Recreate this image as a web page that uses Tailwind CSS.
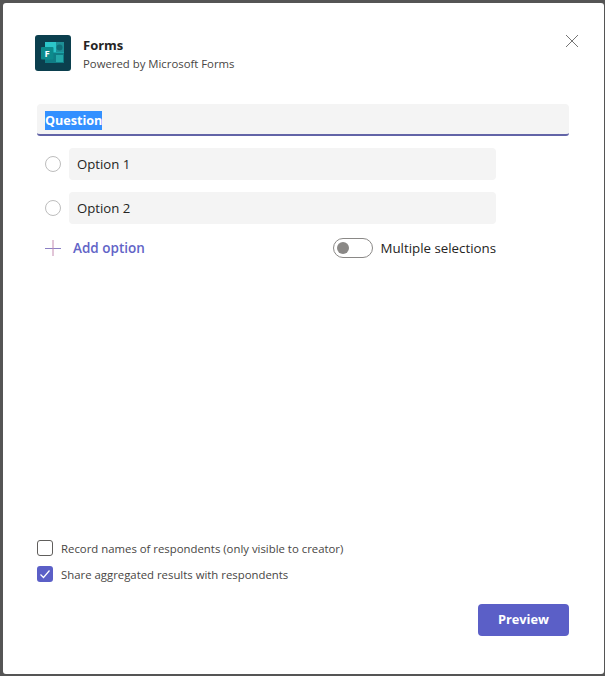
<!DOCTYPE html>
<html>
<head>
    <meta charset="utf-8">
    <script src="https://cdn.jsdelivr.net/npm/@tailwindcss/browser@4"></script>
    <title>Forms</title>
</head>
<body class="bg-[#555555] font-['Open_Sans','Noto_Sans',sans-serif] text-[#252423]">
    <div class="h-[676px] w-[605px] pt-[3px] pr-[1px] pb-[2px] pl-[3px]">
        <div class="relative flex h-full flex-col rounded-[3px] bg-white pt-[32px] pr-[35px] pb-[38px] pl-[34px]">
            <div class="-ml-[2px] flex h-[36px] items-start gap-[12px]">
                <svg width="36" height="36" viewBox="0 0 36 36" class="shrink-0">
                    <rect width="36" height="36" rx="3" fill="#0b3f4e"/>
                    <rect x="10" y="7" width="19" height="21" rx="1" fill="#1aa3a8"/>
                    <rect x="10" y="7" width="11" height="10" fill="#2cc5c9"/>
                    <rect x="21" y="7" width="8" height="10" fill="#1d8f96"/>
                    <circle cx="24.5" cy="12.5" r="3" fill="#0f6e78"/>
                    <rect x="10" y="18" width="19" height="10" fill="#0f7d85"/>
                    <rect x="21" y="20" width="7" height="7" fill="#23a8a8"/>
                    <rect x="6" y="12" width="12.5" height="12.5" rx="1" fill="#0c8a8c"/>
                    <text x="9.5" y="21.8" font-size="9.5" font-weight="700" fill="#ffffff">F</text>
                </svg>
                <div class="flex flex-col pt-[1px]">
                    <div class="text-[13px] leading-[18px] font-bold">Forms</div>
                    <div class="pt-[1px] text-[11.35px] leading-[18px] text-[#484644]">Powered by Microsoft Forms</div>
                </div>
            </div>

            <svg width="14" height="14" viewBox="0 0 14 14" class="absolute top-[31px] right-[25px]" fill="none" stroke="#757575" stroke-width="1">
                <path d="M1 1 L13 13 M13 1 L1 13"/>
            </svg>

            <div class="mt-[33px] flex h-[32px] w-[532px] items-center rounded-t-[4px] rounded-b-[3px] border-b-2 border-[#6264a7] bg-[#f4f4f4] pt-[2px] pl-[8px]">
                <span class="bg-[#3390ff] text-[12.6px] leading-[19px] font-bold text-white">Question</span>
            </div>

            <div class="mt-[12px] flex flex-col gap-[12px]">
                <div class="flex items-center gap-[8px] pl-[8px]">
                    <span class="h-[16px] w-[16px] rounded-full border border-[#bdbdbd]"></span>
                    <div class="flex h-[32px] w-[427px] items-center rounded-[4px] bg-[#f4f4f4] pt-[1px] pl-[8px] text-[13.2px]">Option 1</div>
                </div>
                <div class="flex items-center gap-[8px] pl-[8px]">
                    <span class="h-[16px] w-[16px] rounded-full border border-[#bdbdbd]"></span>
                    <div class="flex h-[32px] w-[427px] items-center rounded-[4px] bg-[#f4f4f4] pt-[1px] pl-[8px] text-[13.2px]">Option 2</div>
                </div>
            </div>

            <div class="mt-[14px] flex h-[20px] w-[459px] items-center pl-[8px]">
                <svg width="16" height="16" viewBox="0 0 16 16" fill="none" stroke-width="1" class="shrink-0">
                    <path d="M0 8.5 H16" stroke="#8b80c4"/>
                    <path d="M8 0 V16" stroke="#c48bb0"/>
                </svg>
                <span class="ml-[12px] pt-[1px] text-[13.5px] font-semibold text-[#6264c7]">Add option</span>
                <div class="ml-auto flex items-center gap-[7px]">
                    <span class="flex h-[20px] w-[40px] items-center rounded-full border border-[#8a8886] pl-[3px]">
                        <span class="h-[12px] w-[12px] rounded-full bg-[#8a8886]"></span>
                    </span>
                    <span class="pt-[1px] text-[13.3px]">Multiple selections</span>
                </div>
            </div>

            <div class="mt-auto flex flex-col gap-[10px]">
                <label class="flex h-[16px] items-center gap-[8px] text-[11.36px] leading-[16px] text-[#484644]">
                    <span class="h-[16px] w-[16px] rounded-[3px] border border-[#605e5c]"></span>
                    <span class="pt-[2px]">Record names of respondents (only visible to creator)</span>
                </label>
                <label class="flex h-[16px] items-center gap-[8px] text-[11.36px] leading-[16px] text-[#484644]">
                    <span class="flex h-[16px] w-[16px] items-center justify-center rounded-[3px] bg-[#5b5fc7]">
                        <svg width="12" height="12" viewBox="0 0 12 12" fill="none" stroke="#ffffff" stroke-width="1.2"><path d="M1.5 6.5 L4.5 9.5 L10.5 2.5"/></svg>
                    </span>
                    <span class="pt-[2px]">Share aggregated results with respondents</span>
                </label>
            </div>

            <div class="mt-[22px] flex w-[532px] justify-end">
                <button class="h-[32px] w-[91px] rounded-[4px] bg-[#5b5fc7] text-[12.8px] font-bold text-white">Preview</button>
            </div>
        </div>
    </div>
</body>
</html>
